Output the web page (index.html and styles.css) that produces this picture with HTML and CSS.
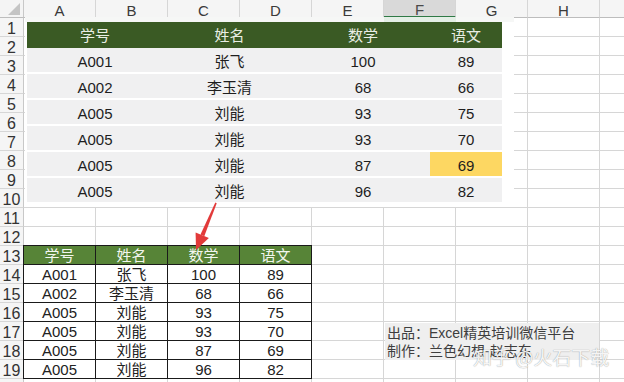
FILE: index.html
```
<!DOCTYPE html>
<html lang="zh-CN">
<head>
<meta charset="utf-8">
<title>Sheet</title>
<link rel="stylesheet" href="styles.css">
</head>
<body>
<div class="sheet">
  <div class="corner"><span class="corner-tri"></span></div>
  <div class="colhead">A</div>
  <div class="colhead">B</div>
  <div class="colhead">C</div>
  <div class="colhead">D</div>
  <div class="colhead">E</div>
  <div class="colhead colhead-sel">F</div>
  <div class="colhead">G</div>
  <div class="colhead">H</div>
  <div class="colhead"></div>

  <div class="rowhead">1</div>
  <div class="rowhead">2</div>
  <div class="rowhead">3</div>
  <div class="rowhead">4</div>
  <div class="rowhead">5</div>
  <div class="rowhead">6</div>
  <div class="rowhead">7</div>
  <div class="rowhead">8</div>
  <div class="rowhead">9</div>
  <div class="rowhead">10</div>
  <div class="rowhead">11</div>
  <div class="rowhead">12</div>
  <div class="rowhead">13</div>
  <div class="rowhead">14</div>
  <div class="rowhead">15</div>
  <div class="rowhead">16</div>
  <div class="rowhead">17</div>
  <div class="rowhead">18</div>
  <div class="rowhead">19</div>
  <div class="rowhead">20</div>

  <div class="cells">
    <div class="btable">
      <div class="bcell bhead">学号</div><div class="bcell bhead">姓名</div><div class="bcell bhead">数学</div><div class="bcell bhead">语文</div>
      <div class="bcell">A001</div><div class="bcell">张飞</div><div class="bcell">100</div><div class="bcell">89</div>
      <div class="bcell">A002</div><div class="bcell">李玉清</div><div class="bcell">68</div><div class="bcell">66</div>
      <div class="bcell">A005</div><div class="bcell">刘能</div><div class="bcell">93</div><div class="bcell">75</div>
      <div class="bcell">A005</div><div class="bcell">刘能</div><div class="bcell">93</div><div class="bcell">70</div>
      <div class="bcell">A005</div><div class="bcell">刘能</div><div class="bcell">87</div><div class="bcell">69</div>
      <div class="bcell">A005</div><div class="bcell">刘能</div><div class="bcell">96</div><div class="bcell">82</div>
    </div>
  </div>

  <div class="picture">
    <div class="pic-strip"><span class="pic-strip-sel"></span></div>
    <div class="ptable">
      <div class="pcell phead">学号</div><div class="pcell phead">姓名</div><div class="pcell phead">数学</div><div class="pcell phead">语文</div>
      <div class="pcell">A001</div><div class="pcell">张飞</div><div class="pcell">100</div><div class="pcell">89</div>
      <div class="pcell">A002</div><div class="pcell">李玉清</div><div class="pcell">68</div><div class="pcell">66</div>
      <div class="pcell">A005</div><div class="pcell">刘能</div><div class="pcell">93</div><div class="pcell">75</div>
      <div class="pcell">A005</div><div class="pcell">刘能</div><div class="pcell">93</div><div class="pcell">70</div>
      <div class="pcell">A005</div><div class="pcell">刘能</div><div class="pcell">87</div><div class="pcell pcell-hl">69</div>
      <div class="pcell">A005</div><div class="pcell">刘能</div><div class="pcell">96</div><div class="pcell">82</div>
    </div>
  </div>

  <svg class="arrow" width="40" height="56" viewBox="0 0 40 56">
    <polygon points="32.7,5.2 31.3,4.6 16.5,36.5 20.3,38.3" fill="#e23a3a"/>
    <polygon points="12,52 11.6,34.4 24.9,40.1" fill="#e23a3a"/>
  </svg>

  <div class="credit">
    <div>出品：Excel精英培训微信平台</div>
    <div>制作：兰色幻想-赵志东</div>
  </div>
  <div class="watermark">知乎 @火石下载</div>
</div>
</body>
</html>
```

FILE: styles.css
```
html, body {
  margin: 0;
  padding: 0;
  background: #ffffff;
}

.sheet {
  position: relative;
  width: 624px;
  height: 382px;
  overflow: hidden;
  display: grid;
  grid-template-columns: 24px repeat(9, 72px);
  grid-template-rows: 18px repeat(20, 19px);
  font-family: "Liberation Sans", "Noto Sans CJK SC", sans-serif;
  color: #222;
  background: #fff;
}

.corner {
  box-sizing: border-box;
  background: #f4f4f4;
  border-right: 1px solid #c8c8c8;
  border-bottom: 1px solid #bdbdbd;
  display: flex;
  justify-content: flex-end;
  align-items: flex-end;
  padding: 0 3px 2px 0;
}

.corner-tri {
  width: 0;
  height: 0;
  border-left: 12px solid transparent;
  border-bottom: 12px solid #c4c4c4;
}

.colhead {
  box-sizing: border-box;
  background: #f5f5f5;
  border-right: 1px solid #d6d6d6;
  border-bottom: 1px solid #bdbdbd;
  font-size: 15px;
  color: #3a3a3a;
  display: flex;
  justify-content: center;
  align-items: center;
  padding-top: 3px;
  line-height: 1;
}

.colhead-sel {
  background: #d9d9d9;
  border-bottom: 2px solid #2f7a46;
  color: #4a4a4a;
}

.rowhead {
  grid-column: 1;
  box-sizing: border-box;
  background: #f5f5f5;
  border-right: 1px solid #c8c8c8;
  border-bottom: 1px solid #d6d6d6;
  font-size: 16px;
  color: #333;
  display: flex;
  justify-content: center;
  align-items: center;
  padding-top: 3px;
  line-height: 1;
}

.cells {
  grid-column: 2 / -1;
  grid-row: 2 / -1;
  display: grid;
  grid-template-columns: repeat(9, 72px);
  grid-template-rows: repeat(20, 19px);
  background-image:
    linear-gradient(to right, transparent 71px, #d6d6d6 71px),
    linear-gradient(to bottom, transparent 18px, #d6d6d6 18px);
  background-size: 72px 19px;
}

.btable {
  grid-column: 1 / span 4;
  grid-row: 13 / span 7;
  margin: -1px 0 0 -1px;
  width: 289px;
  height: 134px;
  justify-self: start;
  align-self: start;
  box-sizing: border-box;
  border-top: 1px solid #1a1a1a;
  border-left: 1px solid #1a1a1a;
  display: grid;
  grid-template-columns: repeat(4, 72px);
  grid-template-rows: repeat(7, 19px);
  background: #fff;
}

.bcell {
  box-sizing: border-box;
  border-right: 1px solid #1a1a1a;
  border-bottom: 1px solid #1a1a1a;
  font-size: 15px;
  color: #222;
  display: flex;
  justify-content: center;
  align-items: center;
  line-height: 1;
  padding-top: 1px;
}

.bhead {
  background: #578437;
  color: #f2f6ee;
}

.picture {
  position: absolute;
  left: 25px;
  top: 17px;
  width: 489px;
  height: 190px;
  background: #ffffff;
  display: flex;
  flex-direction: column;
}

.pic-strip {
  height: 5px;
  background: #f6f7f6;
  display: flex;
}

.pic-strip-sel {
  margin-left: 359px;
  width: 72px;
  background: #e4efe6;
}

.ptable {
  margin-left: 2px;
  width: 475px;
  display: grid;
  grid-template-columns: 136px 133px 134px 72px;
  grid-template-rows: repeat(7, 26px);
}

.pcell {
  box-sizing: border-box;
  background: #f0f0f1;
  border-bottom: 2px solid #ffffff;
  font-size: 15px;
  color: #1e1e1e;
  display: flex;
  justify-content: center;
  align-items: center;
  line-height: 1;
  padding-top: 2px;
}

.phead {
  background: #3a5a24;
  border-bottom: 0;
  color: #e9eee4;
  padding-top: 1px;
}

.pcell-hl {
  background: #fdd762;
}

.arrow {
  position: absolute;
  left: 184px;
  top: 198px;
}

.credit {
  position: absolute;
  left: 385px;
  top: 323px;
  width: 214px;
  height: 37px;
  box-sizing: border-box;
  padding: 1px 0 0 2px;
  background: #efefef;
  font-family: "Liberation Sans", "Noto Sans CJK SC", sans-serif;
  font-size: 14px;
  line-height: 18px;
  color: #3e3e3e;
}

.watermark {
  position: absolute;
  left: 473px;
  top: 346px;
  font-family: "Noto Sans CJK SC", sans-serif;
  font-size: 19px;
  line-height: 22px;
  color: rgba(255, 255, 255, 0.92);
  text-shadow: 0 0 1px rgba(0, 0, 0, 0.45);
  white-space: nowrap;
}
```
